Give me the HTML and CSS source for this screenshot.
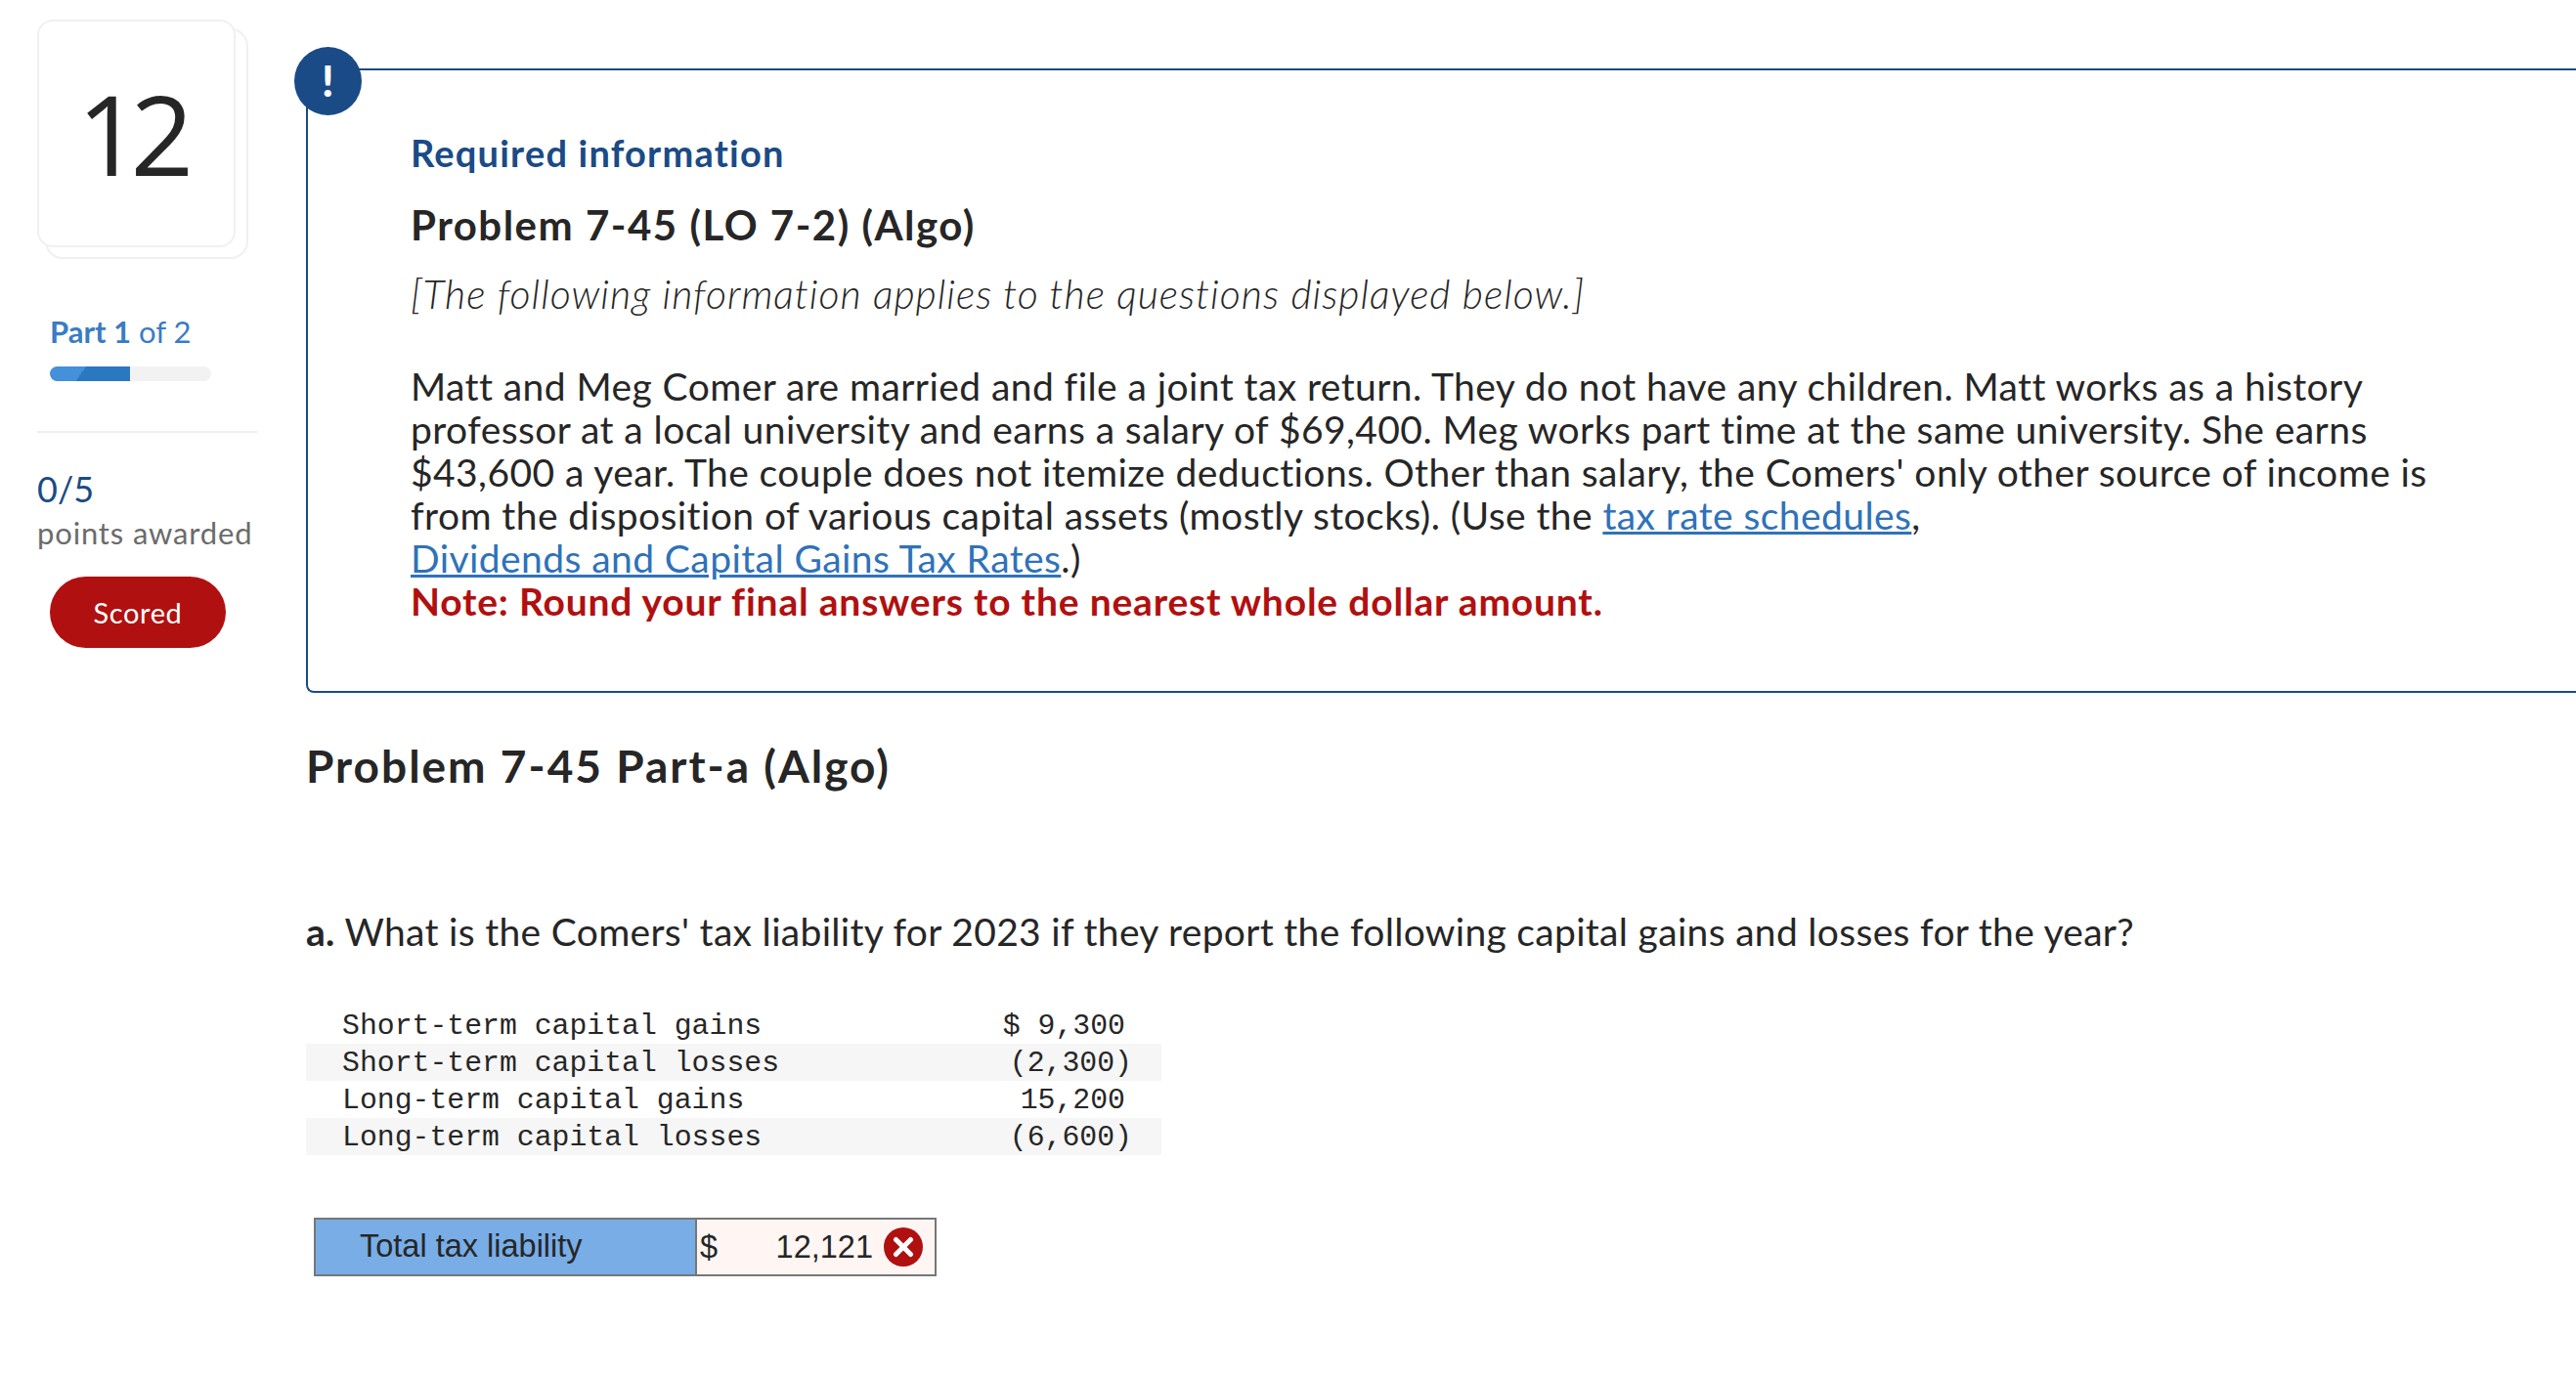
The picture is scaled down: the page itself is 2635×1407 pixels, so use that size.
FILE: index.html
```html
<!DOCTYPE html>
<html lang="en">
<head>
    <meta charset="UTF-8">
    <meta name="viewport" content="width=device-width, initial-scale=1.0">
    <title>Problem 7-45</title>
    <link rel="stylesheet" href="styles.css">
</head>
<body>

    <div class="page">
        <aside class="sidebar">
            <div class="number-card"><div class="number-face">12</div></div>
            <div class="part"><b>Part 1</b> of 2</div>
            <div class="part-bar"><div class="part-fill"></div></div>
            <hr class="divider">
            <div class="score">0/5</div>
            <div class="score-label">points awarded</div>
            <div class="scored-pill">Scored</div>
        </aside>

        <main class="content">
            <section class="info-box">
                <div class="info-icon">!</div>
                <div class="info-title">Required information</div>
                <div class="info-problem">Problem 7-45 (LO 7-2) (Algo)</div>
                <p class="info-note"><i>[The following information applies to the questions displayed below.]</i></p>
                <p class="info-text">Matt and Meg Comer are married and file a joint tax return. They do not have any children. Matt works as a history<br>
                professor at a local university and earns a salary of $69,400. Meg works part time at the same university. She earns<br>
                $43,600 a year. The couple does not itemize deductions. Other than salary, the Comers' only other source of income is<br>
                from the disposition of various capital assets (mostly stocks). (Use the <a href="#">tax rate schedules</a>,<br>
                <a href="#">Dividends and Capital Gains Tax Rates</a>.)<br>
                <b class="round-note">Note: Round your final answers to the nearest whole dollar amount.</b></p>
            </section>

            <h2 class="part-title">Problem 7-45 Part-a (Algo)</h2>

            <p class="question"><b>a.</b> What is the Comers' tax liability for 2023 if they report the following capital gains and losses for the year?</p>

            <table class="gains">
                <tr><td>Short-term capital gains</td><td class="num">$ 9,300</td></tr>
                <tr><td>Short-term capital losses</td><td class="num neg">(2,300)</td></tr>
                <tr><td>Long-term capital gains</td><td class="num">15,200</td></tr>
                <tr><td>Long-term capital losses</td><td class="num neg">(6,600)</td></tr>
            </table>

            <div class="answer">
                <div class="answer-label">Total tax liability</div>
                <div class="answer-value">
                    <span class="dollar">$</span>
                    <span class="amount">12,121</span>
                    <svg class="wrong-icon" viewBox="0 0 40 40">
                        <circle cx="20" cy="20" r="20" fill="#b11010"/>
                        <path d="M12.5 12.5 L27.5 27.5 M27.5 12.5 L12.5 27.5" stroke="#fff" stroke-width="5" stroke-linecap="round"/>
                    </svg>
                </div>
            </div>
        </main>
    </div>

</body>
</html>
```

FILE: styles.css
```css
html, body {
    margin: 0;
    padding: 0;
    background: white;
    overflow: hidden;
}

body {
    font-family: Lato, "Open Sans", sans-serif;
    color: #262626;
}

.page {
    display: flex;
    width: 2635px;
    height: 1407px;
}

/* left column */
.sidebar {
    width: 313px;
    flex: none;
    padding: 20px 0 0 38px;
    box-sizing: border-box;
}

.number-card {
    position: relative;
    width: 203px;
    height: 233px;
    margin-bottom: 66px;
}

.number-card::before {
    content: "";
    position: absolute;
    left: 8px;
    top: 9px;
    width: 208px;
    height: 236px;
    border: 2px solid #f0f0f0;
    border-radius: 18px;
    box-sizing: border-box;
}

.number-face {
    position: relative;
    height: 100%;
    background: white;
    border: 2px solid #f0f0f0;
    border-radius: 16px;
    box-sizing: border-box;
    padding-right: 12px;
    font-family: "Open Sans", sans-serif;
    font-size: 113px;
    font-weight: 500;
    letter-spacing: -10px;
    line-height: 229px;
    text-align: center;
    color: #262626;
}

.part {
    margin-left: 13px;
    font-size: 31px;
    line-height: 40px;
    color: #3a7cc4;
}

.part-bar {
    width: 165px;
    height: 15px;
    margin: 16px 0 0 13px;
    background: #f2f2f2;
    border-radius: 8px;
    overflow: hidden;
}

.part-fill {
    width: 82px;
    height: 100%;
    background: linear-gradient(125deg, #4490da 0, #4490da 40%, #2a78bf 40%);
}

.divider {
    width: 225px;
    height: 2px;
    margin: 51px 0 0;
    border: 0;
    background: #eeeeee;
}

.score {
    margin-top: 36px;
    font-size: 36px;
    line-height: 42px;
    color: #1a4b86;
}

.score-label {
    margin-top: 4px;
    font-size: 31px;
    letter-spacing: 0.85px;
    line-height: 40px;
    color: #6b6b6b;
}

.scored-pill {
    width: 180px;
    height: 73px;
    margin: 25px 0 0 13px;
    background: #b11010;
    border-radius: 37px;
    color: white;
    font-size: 29px;
    letter-spacing: 0.6px;
    line-height: 73px;
    text-align: center;
}

/* main column */
.content {
    flex: 1;
    padding-top: 70px;
}

.info-box {
    position: relative;
    padding: 62px 0 70px 105px;
    border: 2px solid #1a4b86;
    border-right: 0;
    border-bottom-left-radius: 8px;
    font-size: 39px;
    letter-spacing: 0.42px;
    line-height: 44px;
}

.info-icon {
    position: absolute;
    left: -14px;
    top: -24px;
    width: 69px;
    height: 70px;
    background: #1a4b86;
    border-radius: 50%;
    color: white;
    font-size: 44px;
    font-weight: 900;
    line-height: 68px;
    text-align: center;
}

.info-title {
    font-size: 38px;
    font-weight: 700;
    letter-spacing: 1.2px;
    color: #1a4b86;
}

.info-problem {
    margin-top: 30px;
    font-size: 42px;
    font-weight: 700;
    letter-spacing: 1.5px;
}

.info-note {
    margin: 27px 0 0;
    font-size: 41px;
    font-weight: 300;
    letter-spacing: 1px;
}

.info-text {
    margin: 50px 0 0;
}

.info-text a {
    color: #2f72b9;
}

.round-note {
    color: #b11010;
    letter-spacing: 0.8px;
}

.part-title {
    margin: 50px 0 0;
    font-size: 46px;
    letter-spacing: 2px;
    line-height: 50px;
    font-weight: 700;
}

.question {
    margin: 122px 0 0;
    font-size: 39px;
    letter-spacing: 0.31px;
    line-height: 44px;
}

.gains {
    width: 875px;
    margin-top: 55px;
    border-collapse: collapse;
    font-family: "Liberation Mono", monospace;
    font-size: 29.8px;
}

.gains td {
    height: 36px;
    padding: 2px 0 0 37px;
    line-height: 36px;
    white-space: pre;
}

.gains tr:nth-child(even) {
    background: #f6f6f6;
}

.gains .num {
    padding: 2px 37px 0 0;
    text-align: right;
}

.gains .neg {
    padding-right: 30px;
}

.answer {
    display: flex;
    width: 637px;
    height: 60px;
    margin: 64px 0 0 8px;
    border: 2px solid #777777;
    box-sizing: border-box;
    font-family: "Liberation Sans", Arial, sans-serif;
    font-size: 32.5px;
    line-height: 55px;
}

.answer-label {
    width: 390px;
    padding-left: 45px;
    box-sizing: border-box;
    background: #78ade6;
    border-right: 2px solid #777777;
}

.answer-value {
    flex: 1;
    display: flex;
    align-items: center;
    padding: 0 12px 0 3px;
    background: #fff6f4;
}

.amount {
    margin-left: auto;
}

.wrong-icon {
    width: 40px;
    height: 40px;
    margin-left: 11px;
}
```
